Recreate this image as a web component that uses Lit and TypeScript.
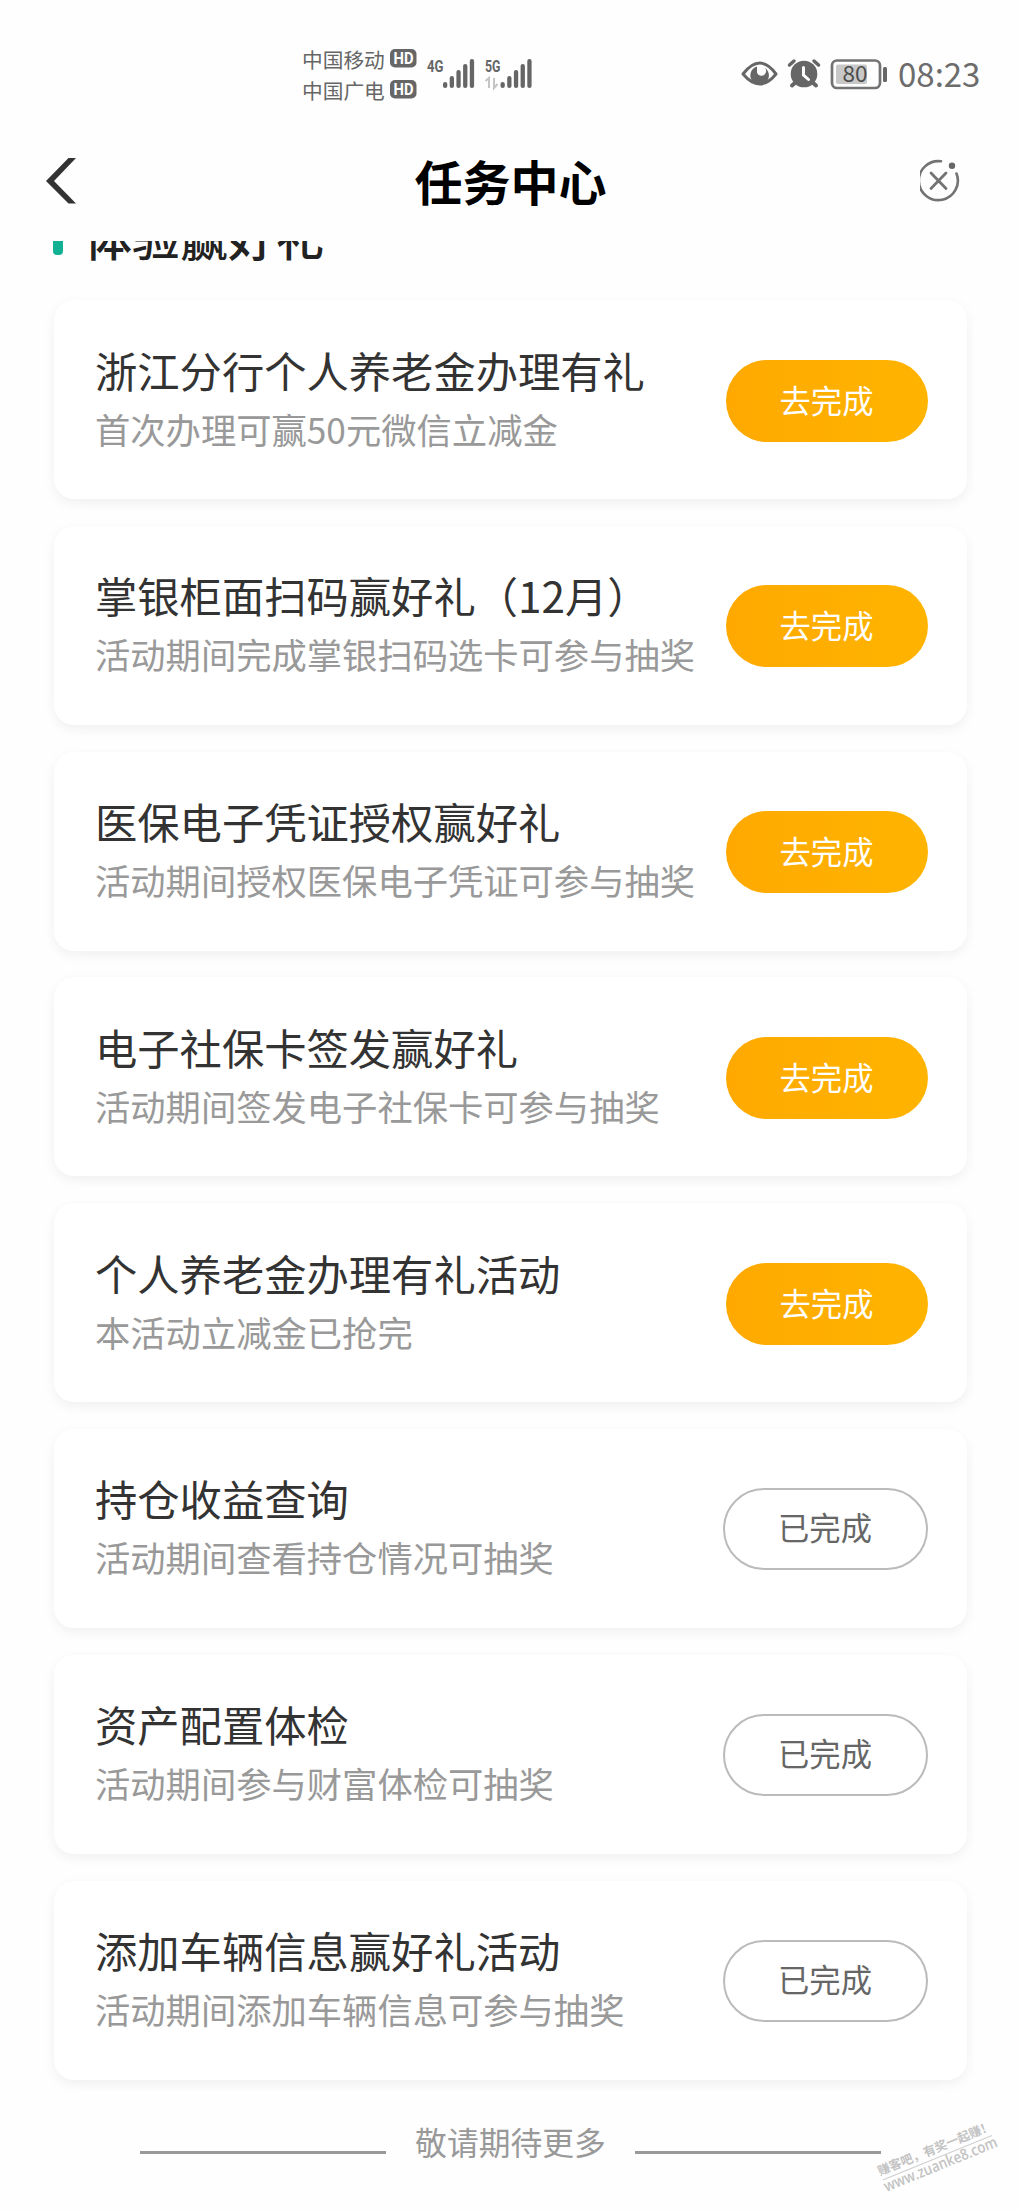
import { LitElement, html, css, svg } from "lit";
import { customElement, property } from "lit/decorators.js";
import { classMap } from "lit/directives/class-map.js";

interface Task {
  title: string;
  desc: string;
  done: boolean;
}

const TASKS: Task[] = [
  { title: "浙江分行个人养老金办理有礼", desc: "首次办理可赢50元微信立减金", done: false },
  { title: "掌银柜面扫码赢好礼（12月）", desc: "活动期间完成掌银扫码选卡可参与抽奖", done: false },
  { title: "医保电子凭证授权赢好礼", desc: "活动期间授权医保电子凭证可参与抽奖", done: false },
  { title: "电子社保卡签发赢好礼", desc: "活动期间签发电子社保卡可参与抽奖", done: false },
  { title: "个人养老金办理有礼活动", desc: "本活动立减金已抢完", done: false },
  { title: "持仓收益查询", desc: "活动期间查看持仓情况可抽奖", done: true },
  { title: "资产配置体检", desc: "活动期间参与财富体检可抽奖", done: true },
  { title: "添加车辆信息赢好礼活动", desc: "活动期间添加车辆信息可参与抽奖", done: true },
];

const signalBars = [6, 12, 18, 24, 29];

@customElement("status-bar")
export class StatusBar extends LitElement {
  static styles = css`
    :host {
      display: flex;
      height: 140px;
      box-sizing: border-box;
      padding: 43px 40px 0 302px;
      color: #666;
    }
    .carriers {
      display: flex;
      flex-direction: column;
    }
    .carrier {
      display: flex;
      align-items: center;
      gap: 5px;
      height: 31px;
      font-size: 20.7px;
      line-height: 30px;
    }
    .name {
      width: 83px;
      white-space: nowrap;
    }
    .signals {
      margin: 1px 0 0 10px;
    }
    .icons {
      margin: 1px 0 0 auto;
      display: flex;
    }
    .time {
      font-size: 33px;
      line-height: 58px;
      width: 82px;
      margin-left: 9px;
      color: #6c6c6c;
      white-space: nowrap;
    }
    svg {
      display: block;
    }
    .hd {
      font: bold 17px "Roboto", sans-serif;
      fill: #fff;
    }
    .gen {
      font: bold 16.5px "Roboto", sans-serif;
      fill: #666;
    }
    .level {
      font: 22px "Noto Sans CJK SC", sans-serif;
      fill: #4c4c4c;
    }
  `;

  private carrier(name: string) {
    return html`<div class="carrier">
      <span class="name">${name}</span>
      <svg width="27" height="19" viewBox="0 0 27 19">
        <rect width="26.5" height="18.5" rx="5" fill="#666" />
        <text class="hd" x="3.5" y="15.3" textLength="20" lengthAdjust="spacingAndGlyphs">HD</text>
      </svg>
    </div>`;
  }

  private bars(x: number) {
    return signalBars.map(
      (h, i) => svg`<rect x=${x + i * 6.7} y=${44 - h} width="4.3" height=${h} rx="2.1" fill="#666" />`,
    );
  }

  render() {
    return html`
      <div class="carriers">${this.carrier("中国移动")}${this.carrier("中国广电")}</div>
      <svg class="signals" width="110" height="60" viewBox="0 0 110 60">
        <text class="gen" x="0" y="28" textLength="16.5" lengthAdjust="spacingAndGlyphs">4G</text>
        ${this.bars(16)}
        <text class="gen" x="58" y="28" textLength="15.5" lengthAdjust="spacingAndGlyphs">5G</text>
        <path d="M58.500 37l3.500-3v10M67 34v10l3.500-4" fill="none" stroke="#c4c4c4" stroke-width="2" />
        ${this.bars(73.5)}
      </svg>
      <div class="icons">
        <svg width="148" height="60" viewBox="741 44 148 60">
          <path d="M743 74q17-22 33 0q-16 20-33 0z" fill="none" stroke="#666" stroke-width="3" stroke-linejoin="round" />
          <path d="M757 66.500a9.300 9.300 0 1 0 7.500 1a4.700 4.700 0 1 1-7.500 5z" fill="#666" />
          <circle cx="804" cy="74" r="13.300" fill="#666" />
          <path d="M789.500 65l4.500-4M818.500 65l-4.500-4" stroke="#666" stroke-width="3.500" stroke-linecap="round" />
          <path d="M796 82l-4 3.500M812 82l4 3.500" stroke="#666" stroke-width="4" stroke-linecap="round" />
          <path d="M803.500 67.500v7.500l5 4.500" fill="none" stroke="#fff" stroke-width="3" stroke-linecap="round" />
          <rect x="832" y="60.500" width="48" height="27.500" rx="5" fill="none" stroke="#737373" stroke-width="2.700" />
          <rect x="836" y="64.500" width="31" height="19.500" rx="2" fill="#c8c8c8" />
          <rect x="883" y="67" width="4" height="15" rx="1.500" fill="#666" />
          <text class="level" x="842.500" y="82.300" textLength="25" lengthAdjust="spacingAndGlyphs">80</text>
        </svg>
        <span class="time">08:23</span>
      </div>
    `;
  }
}

@customElement("task-card")
export class TaskCard extends LitElement {
  @property({ attribute: false }) task!: Task;

  static styles = css`
    :host {
      display: flex;
      align-items: center;
      justify-content: space-between;
      box-sizing: border-box;
      height: 199px;
      padding: 0 39px 0 41px;
      border-radius: 20px;
      background: #fff;
      box-shadow: 0 4px 12px rgba(0, 0, 0, 0.06);
      white-space: nowrap;
    }
    .title {
      font-size: 42.3px;
      line-height: 62px;
      color: #333;
    }
    .desc {
      font-size: 35.3px;
      line-height: 56px;
      color: #999;
    }
    .text {
      width: 627px;
      padding-bottom: 4px;
    }
    .action {
      flex: none;
      box-sizing: border-box;
      width: 202px;
      height: 82px;
      border: 0;
      border-radius: 41px;
      margin-top: 2px;
      padding: 0 0 2px;
      font: inherit;
      font-size: 31.3px;
      line-height: 78px;
      text-align: center;
      color: #fff;
      background: linear-gradient(90deg, #ffa900, #ffb400);
    }
    .action.done {
      width: 205px;
      border: 2px solid #bbb;
      padding-bottom: 4px;
      line-height: 72px;
      color: #666;
      background: #fff;
    }
  `;

  render() {
    const { title, desc, done } = this.task;
    return html`
      <div class="text">
        <div class="title">${title}</div>
        <div class="desc">${desc}</div>
      </div>
      <button class=${classMap({ action: true, done })}>${done ? "已完成" : "去完成"}</button>
    `;
  }
}

@customElement("app-root")
export class AppRoot extends LitElement {
  static styles = css`
    :host {
      display: block;
      position: relative;
      width: 1020px;
      height: 2210px;
      overflow: hidden;
      background: #fefefe;
      font-family: "Noto Sans CJK SC", sans-serif;
    }
    .nav {
      display: grid;
      grid-template-columns: 100px 1fr 100px;
      height: 101px;
    }
    .nav svg {
      display: block;
    }
    .nav h1 {
      margin: 0 0 0 1px;
      font-size: 48px;
      line-height: 80px;
      font-weight: 700;
      text-align: center;
      color: #000;
    }
    .section {
      display: flex;
      align-items: flex-end;
      height: 59px;
      padding-left: 53px;
      overflow: hidden;
    }
    .marker {
      width: 10px;
      height: 36px;
      margin: 0 21px 45px 0;
      border-radius: 4px;
      background: #12b193;
    }
    .section h2 {
      margin: 0 0 30px;
      font-size: 48px;
      line-height: 70px;
      font-weight: 500;
      color: #222;
    }
    .list {
      display: flex;
      flex-direction: column;
      gap: 26.8px;
      padding: 0 53.5px 0 54px;
    }
    .more {
      display: flex;
      justify-content: center;
      gap: 29.5px;
      margin: 36px 0 0 1px;
      font-size: 31.8px;
      line-height: 50px;
      color: #999;
    }
    .rule {
      width: 246px;
      height: 3px;
      margin-top: 35px;
      background: #999;
    }
    .mark {
      position: absolute;
      right: 0;
      bottom: 0;
      overflow: visible;
    }
    .mark text {
      fill: #c3c3c3;
    }
    .slogan {
      font: bold 12.5px "Noto Sans CJK SC", sans-serif;
    }
    .site {
      font: 600 15.5px "Open Sans", sans-serif;
    }
  `;

  render() {
    return html`
      <status-bar></status-bar>
      <div class="nav">
        <svg width="100" height="101" viewBox="0 140 100 101">
          <path d="M68.500 158h7.500L54 181l22 22.500h-7.500L46 181z" fill="#333" />
        </svg>
        <h1>任务中心</h1>
        <svg width="100" height="101" viewBox="920 140 100 101">
          <path d="M941 161.300A19.500 19.500 0 1 0 956.500 173.500" fill="none" stroke="#737373" stroke-width="2.600" stroke-linecap="round" />
          <path d="M931 173l15 15.500M946 173l-15 15.500" stroke="#737373" stroke-width="2.800" stroke-linecap="round" />
          <circle cx="952" cy="165.700" r="3.200" fill="#666" />
        </svg>
      </div>
      <div class="section">
        <span class="marker"></span>
        <h2>体验赢好礼</h2>
      </div>
      <div class="list">${TASKS.map((t) => html`<task-card .task=${t}></task-card>`)}</div>
      <div class="more"><span class="rule"></span><span>敬请期待更多</span><span class="rule"></span></div>
      <svg class="mark" width="150" height="90" viewBox="870 2120 150 90">
        <g transform="translate(882.700 2180) rotate(-22.200)">
          <text class="slogan" x="-1" y="-5" textLength="123" lengthAdjust="spacingAndGlyphs">赚客吧，有奖一起赚！</text>
          <path d="M0 0H118" stroke="#cfcfcf" stroke-width="1" />
          <text class="site" x="-1" y="12.500" textLength="121" lengthAdjust="spacingAndGlyphs">www.zuanke8.com</text>
        </g>
      </svg>
    `;
  }
}
